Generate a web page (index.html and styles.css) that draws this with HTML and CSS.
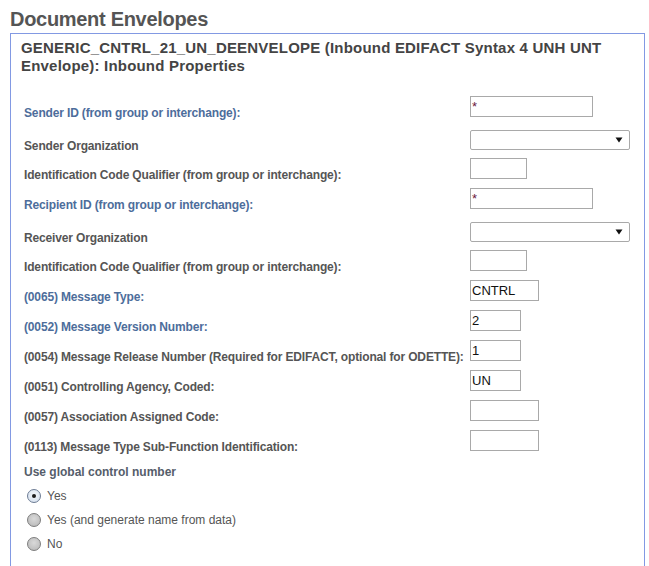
FILE: index.html
```html
<!DOCTYPE html>
<html lang="en">
<head>
<meta charset="utf-8">
<title>Document Envelopes</title>
<link rel="stylesheet" href="styles.css">
</head>
<body>
<h1 class="page-title">Document Envelopes</h1>
<div class="panel">
  <h2 class="panel-title">GENERIC_CNTRL_21_UN_DEENVELOPE (Inbound EDIFACT Syntax 4 UNH UNT Envelope): Inbound Properties</h2>
  <div class="form">
    <div class="row">
      <div class="lbl blue">Sender ID (from group or interchange):</div>
      <input class="field w123 req" type="text" value="*">
    </div>
    <div class="row sel-row">
      <div class="lbl">Sender Organization</div>
      <div class="select"><svg class="arrow" width="8" height="6" viewBox="0 0 8 6"><path d="M0.5 0.5 H7.5 L4 5.5 Z" fill="#111"/></svg></div>
    </div>
    <div class="row">
      <div class="lbl">Identification Code Qualifier (from group or interchange):</div>
      <input class="field w57" type="text" value="">
    </div>
    <div class="row">
      <div class="lbl blue">Recipient ID (from group or interchange):</div>
      <input class="field w123 req" type="text" value="*">
    </div>
    <div class="row sel-row">
      <div class="lbl">Receiver Organization</div>
      <div class="select"><svg class="arrow" width="8" height="6" viewBox="0 0 8 6"><path d="M0.5 0.5 H7.5 L4 5.5 Z" fill="#111"/></svg></div>
    </div>
    <div class="row">
      <div class="lbl">Identification Code Qualifier (from group or interchange):</div>
      <input class="field w57" type="text" value="">
    </div>
    <div class="row">
      <div class="lbl blue">(0065) Message Type:</div>
      <input class="field w69" type="text" value="CNTRL">
    </div>
    <div class="row">
      <div class="lbl blue">(0052) Message Version Number:</div>
      <input class="field w51" type="text" value="2">
    </div>
    <div class="row">
      <div class="lbl">(0054) Message Release Number (Required for EDIFACT, optional for ODETTE):</div>
      <input class="field w51" type="text" value="1">
    </div>
    <div class="row">
      <div class="lbl">(0051) Controlling Agency, Coded:</div>
      <input class="field w51" type="text" value="UN">
    </div>
    <div class="row">
      <div class="lbl">(0057) Association Assigned Code:</div>
      <input class="field w69" type="text" value="">
    </div>
    <div class="row">
      <div class="lbl">(0113) Message Type Sub-Function Identification:</div>
      <input class="field w69" type="text" value="">
    </div>
  </div>
  <div class="radio-group">
    <div class="group-label">Use global control number</div>
    <div class="radio-row"><span class="radio checked"></span><span class="radio-text">Yes</span></div>
    <div class="radio-row"><span class="radio"></span><span class="radio-text">Yes (and generate name from data)</span></div>
    <div class="radio-row"><span class="radio"></span><span class="radio-text">No</span></div>
  </div>
</div>
</body>
</html>
```
FILE: styles.css
```css
html, body {
  margin: 0;
  padding: 0;
  background: #ffffff;
  font-family: "Liberation Sans", Arial, sans-serif;
}

.page-title {
  margin: 8px 0 0 10px;
  font-size: 20px;
  line-height: 23px;
  font-weight: bold;
  letter-spacing: -0.3px;
  color: #555555;
}

.panel {
  margin: 2px 4px 0 10px;
  border: 1px solid #8299e3;
  padding: 5px 10px 24px 10px;
}

.panel-title {
  margin: 0;
  font-size: 15px;
  line-height: 18px;
  font-weight: bold;
  letter-spacing: 0.2px;
  color: #444444;
}

.form {
  margin: 21px 0 0 3px;
}

.row {
  display: flex;
  align-items: flex-start;
  height: 30px;
}

.row.sel-row {
  margin-top: 4px;
  height: 28px;
}

.lbl {
  width: 446px;
  flex: none;
  padding-top: 10px;
  font-size: 12px;
  line-height: 14px;
  font-weight: bold;
  letter-spacing: -0.15px;
  color: #555555;
  white-space: nowrap;
}

.sel-row .lbl {
  padding-top: 9px;
}

.lbl.blue {
  color: #4d6d9b;
}

.field {
  box-sizing: border-box;
  height: 21px;
  margin: 0;
  border: 1px solid #a9a9a9;
  border-radius: 0;
  padding: 0 1px;
  font-family: "Liberation Sans", Arial, sans-serif;
  font-size: 13px;
  color: #111111;
  background: #ffffff;
  outline: none;
}

.field.req {
  color: #6b1b3b;
}

.w123 { width: 123px; }
.w57 { width: 57px; }
.w69 { width: 69px; }
.w51 { width: 51px; }

.select {
  box-sizing: border-box;
  width: 160px;
  height: 20px;
  border: 1px solid #a9a9a9;
  border-radius: 2px;
  background: #ffffff;
  display: flex;
  align-items: center;
  justify-content: flex-end;
  padding-right: 6px;
}

.arrow {
  display: block;
}

.radio-group {
  margin: 5px 0 0 3px;
}

.group-label {
  font-size: 12px;
  line-height: 14px;
  font-weight: bold;
  color: #555d6a;
  margin-bottom: 5px;
}

.radio-row {
  display: flex;
  align-items: center;
  height: 24px;
  padding-left: 3px;
}

.radio {
  box-sizing: border-box;
  width: 14px;
  height: 14px;
  border-radius: 50%;
  border: 1px solid #7d7d7d;
  background: radial-gradient(circle at 50% 40%, #d9d9d9 0%, #c4c4c4 60%, #b2b2b2 100%);
  position: relative;
  flex: none;
}

.radio.checked {
  border-color: #6d7c94;
  background: radial-gradient(circle at 50% 40%, #f2f6fb 0%, #dce5f1 70%, #c8d3e3 100%);
}

.radio.checked::after {
  content: "";
  position: absolute;
  left: 4px;
  top: 4px;
  width: 4px;
  height: 4px;
  border-radius: 50%;
  background: #1c1c1c;
}

.radio-text {
  margin-left: 6px;
  font-size: 12px;
  line-height: 14px;
  color: #555555;
}
```
